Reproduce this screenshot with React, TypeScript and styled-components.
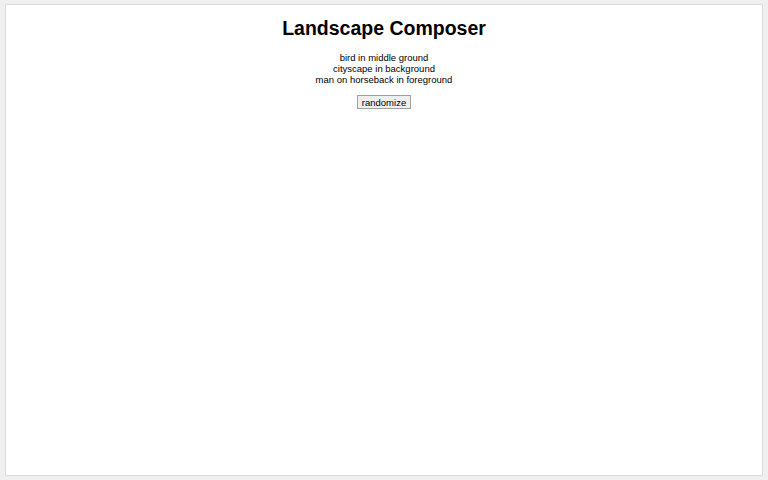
import React, { useState } from "react";
import styled, { createGlobalStyle } from "styled-components";

const Global = createGlobalStyle`
  html, body { margin: 0; padding: 0; }
  body {
    background: #f0f0f0;
    font-family: "Liberation Sans", Arial, sans-serif;
  }
`;

const Page = styled.div`
  padding: 4px 5px;
  box-sizing: border-box;
  height: 480px;
  display: flex;
`;

const Panel = styled.main`
  flex: 1;
  background: #fff;
  border: 1px solid #dcdcdc;
  display: flex;
  flex-direction: column;
  align-items: center;
  padding-top: 12px;
`;

const Title = styled.h1`
  margin: 0;
  font-size: 19.5px;
  font-weight: bold;
  line-height: 22px;
  color: #000;
`;

const Layers = styled.div`
  margin-top: 13px;
  display: flex;
  flex-direction: column;
  align-items: center;
`;

const Layer = styled.div`
  font-size: 9.5px;
  line-height: 11px;
  color: #000;
`;

const Button = styled.button`
  margin-top: 10px;
  font-family: "Liberation Sans", Arial, sans-serif;
  font-size: 9.5px;
  line-height: 11px;
  padding: 1px 4px 0 4px;
  background: #efefef;
  border: 1px solid #a0a0a0;
  border-radius: 0;
  color: #000;
`;

const subjects = ["bird", "cityscape", "man on horseback", "tree", "river", "mountain"];

export default function App() {
  const [list, setList] = useState([
    "bird in middle ground",
    "cityscape in background",
    "man on horseback in foreground",
  ]);
  const randomize = () => {
    const grounds = ["middle ground", "background", "foreground"];
    setList(
      grounds.map(
        (g) => `${subjects[Math.floor(Math.random() * subjects.length)]} in ${g}`
      )
    );
  };
  return (
    <>
      <Global />
      <Page>
        <Panel>
          <Title>Landscape Composer</Title>
          <Layers>
            {list.map((l) => (
              <Layer key={l}>{l}</Layer>
            ))}
          </Layers>
          <Button onClick={randomize}>randomize</Button>
        </Panel>
      </Page>
    </>
  );
}
